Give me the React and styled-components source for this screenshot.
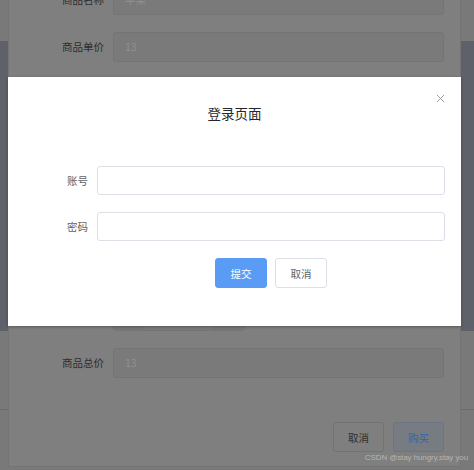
import React from 'react'
import styled, { createGlobalStyle } from 'styled-components'

const GlobalStyle = createGlobalStyle`
  html, body {
    margin: 0;
    padding: 0;
    width: 474px;
    height: 470px;
    overflow: hidden;
    font-family: "Noto Sans CJK SC", "Noto Sans", "Liberation Sans", sans-serif;
  }
  * { box-sizing: border-box; }
`

// page behind both dialogs, already shaded by the modal mask
const Page = styled.div`
  position: relative;
  width: 474px;
  height: 470px;
  display: flex;
  flex-direction: column;
  background: #797979;
`

const PageBand = styled.div`
  height: ${(p) => p.h}px;
  background: ${(p) => p.bg};
  border-bottom: ${(p) => (p.line ? '1px solid #6c6c6c' : 'none')};
  flex: ${(p) => (p.grow ? 1 : 'none')};
`

// purchase dialog, sitting under the login dialog
const OrderDialog = styled.div`
  position: absolute;
  left: 8px;
  top: -47px;
  width: 453px;
  height: 514px;
  background: #7f7f7f;
  border: 1px solid #747474;
  display: flex;
  flex-direction: column;
`

const OrderBody = styled.div`
  flex: 1;
  padding: 0 16px 0 0;
  display: flex;
  flex-direction: column;
  justify-content: flex-end;
`

const OrderItem = styled.div`
  display: flex;
  align-items: flex-start;
  margin-bottom: 17px;
`

const OrderLabel = styled.label`
  width: 104px;
  padding-right: 9px;
  text-align: right;
  font-size: 10.5px;
  line-height: 30px;
  color: #2e2e2e;
  flex: none;
`

const DisabledInput = styled.div`
  flex: ${(p) => (p.w ? 'none' : 1)};
  width: ${(p) => (p.w ? `${p.w}px` : 'auto')};
  height: ${(p) => p.h || 30}px;
  border: 1px solid #747474;
  border-radius: 3px;
  background: #7a7a7a;
  color: #909090;
  font-size: 10.5px;
  line-height: 28px;
  padding: 0 11px;
  display: flex;
`

const NumberStep = styled.span`
  width: 30px;
  height: 100%;
  background: #787878;
  border-${(p) => p.side}: 1px solid #727272;
`

const NumberValue = styled.span`
  flex: 1;
  text-align: center;
`

const OrderFooter = styled.div`
  display: flex;
  justify-content: flex-end;
  gap: 9px;
  padding: 0 16px 14px 0;
  margin-top: 44px;
`

const OrderButton = styled.button`
  width: 51px;
  height: 30px;
  border-radius: 3px;
  font-family: inherit;
  font-size: 10.5px;
  border: 1px solid ${(p) => (p.plain ? '#6d7584' : '#737373')};
  background: ${(p) => (p.plain ? '#777b82' : '#7f7f7f')};
  color: ${(p) => (p.plain ? '#3467a8' : '#2e2e2e')};
  padding: 0;
`

const Watermark = styled.div`
  position: absolute;
  right: 6px;
  bottom: 8px;
  font-family: "Liberation Sans", Arial, sans-serif;
  font-size: 8px;
  color: #b4b4b4;
  letter-spacing: -0.1px;
`

// login dialog
const LoginDialog = styled.div`
  position: absolute;
  left: 8px;
  top: 77px;
  width: 453px;
  height: 249px;
  background: #ffffff;
  box-shadow: 0 1px 3px rgba(0, 0, 0, 0.3);
  display: flex;
  flex-direction: column;
`

const Header = styled.div`
  position: relative;
  padding: 23px 15px 0;
  text-align: center;
`

const Title = styled.span`
  font-size: 13.5px;
  line-height: 18px;
  color: #26272a;
`

const CloseButton = styled.button`
  position: absolute;
  top: 15px;
  right: 15px;
  width: 12px;
  height: 12px;
  padding: 0;
  border: none;
  background: none;
  display: flex;
  align-items: center;
  justify-content: center;
`

const Form = styled.form`
  padding: 42px 16px 0 15px;
`

const FormItem = styled.div`
  display: flex;
  align-items: center;
  margin-bottom: ${(p) => p.mb ?? 17}px;
`

const Label = styled.label`
  width: 74px;
  padding-right: 9px;
  text-align: right;
  font-size: 10.5px;
  color: #606266;
  flex: none;
`

const Input = styled.input`
  flex: 1;
  height: 29px;
  border: 1px solid #dcdfe6;
  border-radius: 3px;
  background: #fff;
  outline: none;
  padding: 0 11px;
  font-family: inherit;
  font-size: 10.5px;
`

const Actions = styled.div`
  flex: 1;
  display: flex;
  justify-content: center;
  gap: 8px;
`

const Button = styled.button`
  width: 52px;
  height: 30px;
  padding: 0;
  border-radius: 3px;
  font-family: inherit;
  font-size: 10.5px;
  border: 1px solid ${(p) => (p.primary ? '#5a9cf5' : '#dcdfe6')};
  background: ${(p) => (p.primary ? '#5a9cf5' : '#fff')};
  color: ${(p) => (p.primary ? '#fff' : '#606266')};
`

const orderFields = [
  { label: '商品名称', value: '苹果' },
  { label: '商品单价', value: '13' },
]

export default function App() {
  return (
    <>
      <GlobalStyle />
      <Page>
        <PageBand h={41} bg="#797979" />
        <PageBand h={290} bg="#5e6169" />
        <PageBand h={79} bg="#797979" line />
        <PageBand grow bg="#797979" />

        <OrderDialog>
          <OrderBody>
            {orderFields.map((f) => (
              <OrderItem key={f.label}>
                <OrderLabel>{f.label}</OrderLabel>
                <DisabledInput>{f.value}</DisabledInput>
              </OrderItem>
            ))}
            <OrderItem>
              <OrderLabel>商品图片</OrderLabel>
              <DisabledInput h={205} />
            </OrderItem>
            <OrderItem>
              <OrderLabel>购买数量</OrderLabel>
              <DisabledInput w={132} style={{ padding: 0 }}>
                <NumberStep side="right" />
                <NumberValue>1</NumberValue>
                <NumberStep side="left" />
              </DisabledInput>
            </OrderItem>
            <OrderItem style={{ marginBottom: 0 }}>
              <OrderLabel>商品总价</OrderLabel>
              <DisabledInput>13</DisabledInput>
            </OrderItem>
          </OrderBody>
          <OrderFooter>
            <OrderButton>取消</OrderButton>
            <OrderButton plain>购买</OrderButton>
          </OrderFooter>
        </OrderDialog>

        <LoginDialog>
          <Header>
            <Title>登录页面</Title>
            <CloseButton aria-label="close">
              <svg width="9" height="9" viewBox="0 0 10 10">
                <path d="M1 1 L9 9 M9 1 L1 9" stroke="#909399" strokeWidth="1" />
              </svg>
            </CloseButton>
          </Header>
          <Form onSubmit={(e) => e.preventDefault()}>
            <FormItem>
              <Label>账号</Label>
              <Input />
            </FormItem>
            <FormItem>
              <Label>密码</Label>
              <Input type="password" />
            </FormItem>
            <FormItem mb={0}>
              <Label />
              <Actions>
                <Button primary type="submit">提交</Button>
                <Button type="button">取消</Button>
              </Actions>
            </FormItem>
          </Form>
        </LoginDialog>

        <Watermark>CSDN @stay hungry,stay you</Watermark>
      </Page>
    </>
  )
}
